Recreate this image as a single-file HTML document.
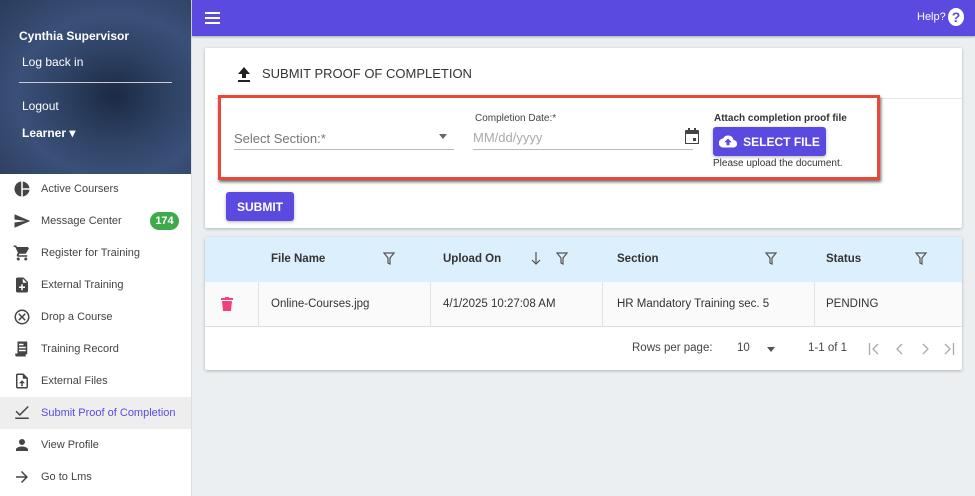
<!DOCTYPE html>
<html><head><meta charset="utf-8"><style>
*{box-sizing:border-box;margin:0;padding:0}
body{width:975px;height:496px;overflow:hidden;background:#eceff1;font-family:"Liberation Sans",sans-serif;position:relative;color:#333}
.side{position:absolute;left:0;top:0;width:192px;height:496px;background:#fff;border-right:1px solid #ddd}
.hdr{position:absolute;left:0;top:0;width:191px;height:174px;background:radial-gradient(ellipse at 60% 55%,#1b2a44 0%,#2f4366 35%,#3a5078 60%,#2b3c5c 100%);color:#fff}
.hdr div{position:absolute;font-size:12px}
.item{position:absolute;left:0;width:191px;height:32px;font-size:11px;color:#444;display:flex;align-items:center}
.item svg{position:absolute;left:13px;width:18px;height:18px;fill:#444}
.item span{position:absolute;left:41px}
.top{position:absolute;left:192px;top:0;width:783px;height:36px;background:#5a4ae0;box-shadow:0 1px 2px rgba(0,0,0,.3)}
.card{position:absolute;background:#fff;box-shadow:0 1px 3px rgba(0,0,0,.25);border-radius:2px}
.btn{position:absolute;background:#5a4ae0;color:#fff;font-weight:bold;border-radius:3px;box-shadow:0 1px 3px rgba(0,0,0,.3);display:flex;align-items:center;justify-content:center}
.th{position:absolute;top:253px;font-size:11.5px;font-weight:bold;color:#333}
.td{position:absolute;top:298px;font-size:11.5px;color:#333}
.fil{position:absolute;top:252px;width:12px;height:13px}
.pg{position:absolute;top:342px}
</style></head><body>
<div class="side">
<div class="hdr">
<div style="left:19px;top:29px;font-weight:bold">Cynthia Supervisor</div>
<div style="left:22px;top:55px">Log back in</div>
<div style="left:19px;top:82px;width:153px;height:1px;background:#ccc"></div>
<div style="left:22px;top:99px">Logout</div>
<div style="left:22px;top:126px;font-weight:bold">Learner &#9662;</div>
</div>
<div class="item" style="top:173px"><svg viewBox="0 0 24 24"><path d="M11 2v20C5.9 21.5 2 17.2 2 12s3.9-9.5 9-10zm2 0v9h9c-.5-4.7-4.3-8.5-9-9zm0 11v9c4.7-.5 8.5-4.3 9-9z"/></svg><span>Active Coursers</span></div>
<div class="item" style="top:205px"><svg viewBox="0 0 24 24"><path d="M2 21l21-9L2 3v7l15 2-15 2z"/></svg><span>Message Center</span><div style="position:absolute;left:150px;top:7px;width:29px;height:18px;border-radius:9px;background:#3faa4a;color:#fff;font-size:11px;font-weight:bold;text-align:center;line-height:18px">174</div></div>
<div class="item" style="top:237px"><svg viewBox="0 0 24 24"><path d="M7 18a2 2 0 100 4 2 2 0 000-4zM1 2v2h2l3.6 7.6L5.2 14c-.1.3-.2.6-.2 1 0 1.1.9 2 2 2h12v-2H7.4l1.1-2h7.5c.8 0 1.4-.4 1.7-1l3.6-6.5L19.6 4H5.2l-.9-2zm16 16a2 2 0 100 4 2 2 0 000-4z"/></svg><span>Register for Training</span></div>
<div class="item" style="top:269px"><svg viewBox="0 0 24 24"><path d="M14 2H6c-1.1 0-2 .9-2 2v16c0 1.1.9 2 2 2h12c1.1 0 2-.9 2-2V8zm2 14h-3v3h-2v-3H8v-2h3v-3h2v3h3zm-3-7V3.5L18.5 9z"/></svg><span>External Training</span></div>
<div class="item" style="top:301px"><svg viewBox="0 0 24 24"><path d="M12 2a10 10 0 100 20 10 10 0 000-20zm0 18a8 8 0 110-16 8 8 0 010 16zm3.6-13L12 10.6 8.4 7 7 8.4 10.6 12 7 15.6 8.4 17l3.6-3.6 3.6 3.6 1.4-1.4-3.6-3.6L17 8.4z"/></svg><span>Drop a Course</span></div>
<div class="item" style="top:333px"><svg viewBox="0 0 24 24"><path d="M6 2h13v17H6zM8 5v2h6V5zm0 4v2h9V9zm0 4v2h9v-2zM3 18h14v4H5a2 2 0 01-2-2z"/></svg><span>Training Record</span></div>
<div class="item" style="top:365px"><svg viewBox="0 0 24 24"><path d="M14 2H6c-1.1 0-2 .9-2 2v16c0 1.1.9 2 2 2h12c1.1 0 2-.9 2-2V8zm4 18H6V4h7v5h5zM8 15l4-4 4 4h-3v4h-2v-4z"/></svg><span>External Files</span></div>
<div class="item" style="top:397px;background:#eeeeee"><svg viewBox="0 0 24 24"><path d="M3 20h18v2H3zM9 15.2L4.8 11l-1.4 1.4L9 18 21 6l-1.4-1.4z" transform="translate(0,-2)"/></svg><span style="color:#5a4ae0">Submit Proof of Completion</span></div>
<div class="item" style="top:429px"><svg viewBox="0 0 24 24"><path d="M12 12a4 4 0 100-8 4 4 0 000 8zm0 2c-2.7 0-8 1.3-8 4v2h16v-2c0-2.7-5.3-4-8-4z"/></svg><span>View Profile</span></div>
<div class="item" style="top:461px"><svg viewBox="0 0 24 24"><path d="M12 4l-1.4 1.4 5.6 5.6H4v2h12.2l-5.6 5.6L12 20l8-8z"/></svg><span>Go to Lms</span></div>
</div>
<div class="top">
<div style="position:absolute;left:13px;top:12px;width:15px;height:2px;background:#fff;box-shadow:0 5px 0 #fff,0 10px 0 #fff"></div>
<div style="position:absolute;left:725px;top:11px;color:#fff;font-size:11px">Help?</div>
<div style="position:absolute;left:756px;top:8px;width:16px;height:18px;border-radius:50%;background:#fff;color:#5a4ae0;font-size:14px;font-weight:bold;text-align:center;line-height:18px">?</div>
</div>
<div class="card" style="left:205px;top:48px;width:757px;height:180px">
<svg style="position:absolute;left:32px;top:18px" width="14" height="16" viewBox="0 0 14 16"><path d="M7 1L1 8h4v4h4V8h4z" fill="#222"/><rect x="1" y="14" width="12" height="2" fill="#222"/></svg>
<div style="position:absolute;left:57px;top:18px;font-size:13px;color:#333">SUBMIT PROOF OF COMPLETION</div>
<div style="position:absolute;left:10px;top:50px;width:747px;height:1px;background:#e6e6e6"></div>
</div>
<div style="position:absolute;left:218px;top:95px;width:662px;height:85px;border:3px solid #e8483a;box-shadow:1px 2px 3px rgba(0,0,0,.6);background:#fff"></div>
<div style="position:absolute;left:234px;top:131px;font-size:13px;color:#777">Select Section:*</div>
<div style="position:absolute;left:439px;top:134px;border-left:4px solid transparent;border-right:4px solid transparent;border-top:5px solid #666"></div>
<div style="position:absolute;left:234px;top:149px;width:220px;height:1px;background:#bbb"></div>
<div style="position:absolute;left:475px;top:113px;font-size:10px;color:#444">Completion Date:*</div>
<div style="position:absolute;left:473px;top:130px;font-size:13px;color:#aaa">MM/dd/yyyy</div>
<svg style="position:absolute;left:684px;top:128px" width="16" height="17" viewBox="0 0 16 17"><path d="M2 2h12a1 1 0 011 1v13H1V3a1 1 0 011-1zm0 4v9h12V6z" fill="#444"/><rect x="4" y="0" width="2" height="3" fill="#444"/><rect x="10" y="0" width="2" height="3" fill="#444"/><rect x="9" y="10" width="3" height="3" fill="#444"/></svg>
<div style="position:absolute;left:473px;top:149px;width:220px;height:1px;background:#bbb"></div>
<div style="position:absolute;left:714px;top:113px;font-size:10px;font-weight:bold;color:#333">Attach completion proof file</div>
<div class="btn" style="left:713px;top:127px;width:113px;height:29px;font-size:12px"><svg width="18" height="13" viewBox="0 0 24 16" style="margin-right:6px"><path d="M19.4 6A7.5 7.5 0 005.4 4 6 6 0 006 16h13a5 5 0 00.4-10zM14 9v4h-4V9H7l5-5 5 5z" fill="#fff"/></svg>SELECT FILE</div>
<div style="position:absolute;left:713px;top:158px;font-size:10px;color:#333">Please upload the document.</div>
<div class="btn" style="left:226px;top:192px;width:68px;height:29px;font-size:12px">SUBMIT</div>
<div class="card" style="left:205px;top:237px;width:757px;height:133px;overflow:hidden">
<div style="position:absolute;left:0;top:0;width:757px;height:45px;background:#dceffd"></div>
<div style="position:absolute;left:0;top:45px;width:757px;height:45px;background:#fafafa;border-bottom:1px solid #ddd"></div>
<div style="position:absolute;left:53px;top:45px;width:1px;height:45px;background:#e4e4e4"></div>
<div style="position:absolute;left:225px;top:45px;width:1px;height:45px;background:#e4e4e4"></div>
<div style="position:absolute;left:397px;top:45px;width:1px;height:45px;background:#e4e4e4"></div>
<div style="position:absolute;left:609px;top:45px;width:1px;height:45px;background:#e4e4e4"></div>
<svg style="position:absolute;left:16px;top:60px" width="12" height="14" viewBox="0 0 12 14"><rect x="0" y="1" width="12" height="2" fill="#f0407a"/><rect x="4" y="0" width="4" height="2" fill="#f0407a"/><path d="M1 4h10l-1 10H2z" fill="#f0407a"/></svg>
</div>
<div class="th" style="left:271px">File Name</div>
<div class="th" style="left:443px">Upload On</div>
<div class="th" style="left:617px">Section</div>
<div class="th" style="left:826px">Status</div>
<svg style="position:absolute;left:531px;top:252px" width="10" height="13" viewBox="0 0 10 13"><path d="M5 0v12M1 8l4 4 4-4" fill="none" stroke="#555" stroke-width="1.2"/></svg>
<svg class="fil" style="left:383px" viewBox="0 0 12 13"><path d="M1 1h10L7 6v6L5 11V6z" fill="none" stroke="#555" stroke-width="1.2"/></svg>
<svg class="fil" style="left:556px" viewBox="0 0 12 13"><path d="M1 1h10L7 6v6L5 11V6z" fill="none" stroke="#555" stroke-width="1.2"/></svg>
<svg class="fil" style="left:765px" viewBox="0 0 12 13"><path d="M1 1h10L7 6v6L5 11V6z" fill="none" stroke="#555" stroke-width="1.2"/></svg>
<svg class="fil" style="left:915px" viewBox="0 0 12 13"><path d="M1 1h10L7 6v6L5 11V6z" fill="none" stroke="#555" stroke-width="1.2"/></svg>
<div class="td" style="left:271px">Online-Courses.jpg</div>
<div class="td" style="left:443px">4/1/2025 10:27:08 AM</div>
<div class="td" style="left:617px">HR Mandatory Training sec. 5</div>
<div class="td" style="left:826px">PENDING</div>
<div style="position:absolute;left:632px;top:342px;font-size:11.5px;color:#444">Rows per page:</div>
<div style="position:absolute;left:737px;top:342px;font-size:11.5px;color:#444">10</div>
<div style="position:absolute;left:767px;top:347px;border-left:4px solid transparent;border-right:4px solid transparent;border-top:5px solid #555"></div>
<div style="position:absolute;left:808px;top:342px;font-size:11.5px;color:#444">1-1 of 1</div>
<svg class="pg" style="left:868px" width="12" height="14" viewBox="0 0 12 14"><path d="M1.5 1v12M10 2L5 7l5 5" fill="none" stroke="#aaa" stroke-width="1.3"/></svg>
<svg class="pg" style="left:895px" width="10" height="14" viewBox="0 0 10 14"><path d="M7 2L2 7l5 5" fill="none" stroke="#aaa" stroke-width="1.3"/></svg>
<svg class="pg" style="left:920px" width="10" height="14" viewBox="0 0 10 14"><path d="M3 2l5 5-5 5" fill="none" stroke="#aaa" stroke-width="1.3"/></svg>
<svg class="pg" style="left:943px" width="12" height="14" viewBox="0 0 12 14"><path d="M10.5 1v12M2 2l5 5-5 5" fill="none" stroke="#aaa" stroke-width="1.3"/></svg>
</body></html>
